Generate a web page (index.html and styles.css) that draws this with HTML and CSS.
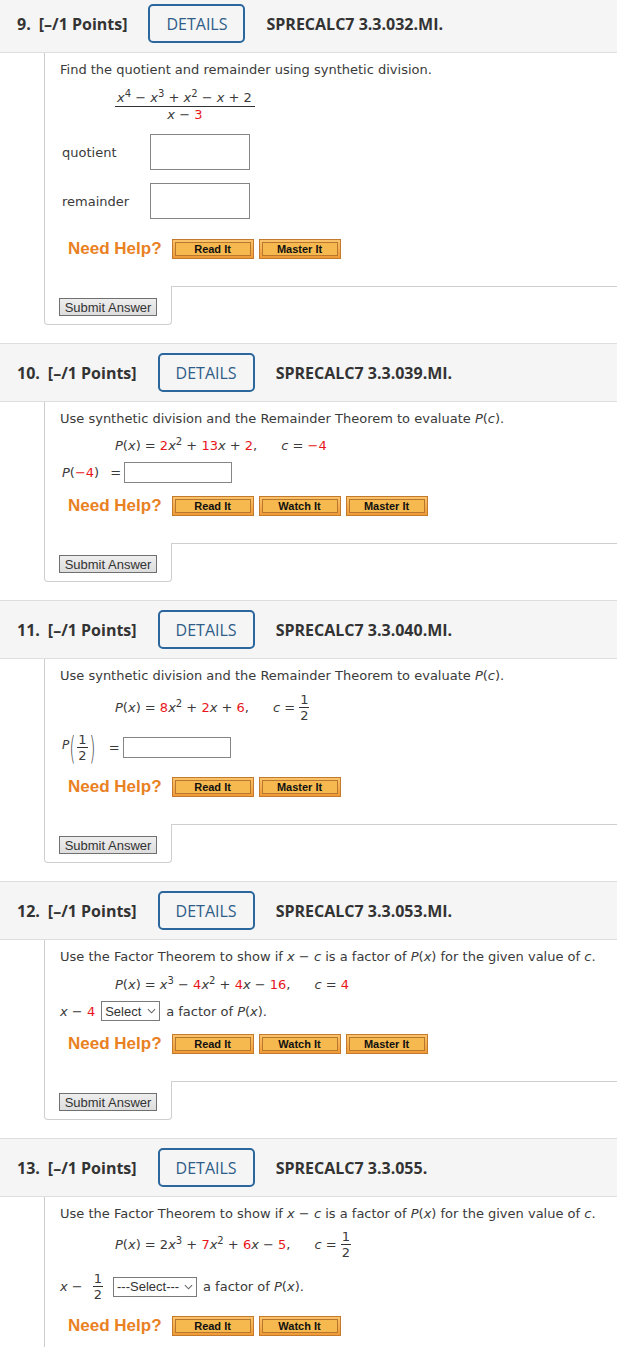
FILE: index.html
```html
<!DOCTYPE html>
<html>
<head>
<meta charset="utf-8">
<link rel="stylesheet" href="styles.css">
</head>
<body>
<div class="page">

<section class="problem">
  <div class="qhead">
    <span class="qnum">9.</span><span class="pts">[–/1 Points]</span>
    <span class="details">DETAILS</span>
    <span class="code">SPRECALC7 3.3.032.MI.</span>
  </div>
  <div class="qbody">
    <div class="content c9">
      <p class="prompt">Find the quotient and remainder using synthetic division.</p>
      <div class="display d9">
        <span class="frac">
          <span class="num"><i>x</i><sup>4</sup> − <i>x</i><sup>3</sup> + <i>x</i><sup>2</sup> − <i>x</i> + 2</span>
          <span class="den"><i>x</i> − <b class="r">3</b></span>
        </span>
      </div>
      <div class="field f-first"><span class="lbl">quotient</span><input class="box big" type="text"></div>
      <div class="field f-second"><span class="lbl">remainder</span><input class="box big" type="text"></div>
      <div class="help h9">
        <span class="need">Need Help?</span>
        <span class="hbtn"><span>Read It</span></span>
        <span class="hbtn"><span>Master It</span></span>
      </div>
    </div>
    <div class="footer"><div class="tab"><button class="submit">Submit Answer</button></div><div class="rest"></div></div>
  </div>
</section>

<section class="problem">
  <div class="qhead">
    <span class="qnum">10.</span><span class="pts">[–/1 Points]</span>
    <span class="details">DETAILS</span>
    <span class="code">SPRECALC7 3.3.039.MI.</span>
  </div>
  <div class="qbody">
    <div class="content">
      <p class="prompt">Use synthetic division and the Remainder Theorem to evaluate <i>P</i>(<i>c</i>).</p>
      <div class="display line d10"><i>P</i>(<i>x</i>) = <b class="r">2</b><i>x</i><sup>2</sup> + <b class="r">13</b><i>x</i> + <b class="r">2</b>,<span class="cgap"><i>c</i> = <b class="r">−4</b></span></div>
      <div class="answer a10"><span class="ans-lbl"><i>P</i>(<b class="r">−4</b>)</span><span class="eq">=</span><input class="box small" type="text"></div>
      <div class="help h10">
        <span class="need">Need Help?</span>
        <span class="hbtn"><span>Read It</span></span>
        <span class="hbtn"><span>Watch It</span></span>
        <span class="hbtn"><span>Master It</span></span>
      </div>
    </div>
    <div class="footer"><div class="tab"><button class="submit">Submit Answer</button></div><div class="rest"></div></div>
  </div>
</section>

<section class="problem">
  <div class="qhead">
    <span class="qnum">11.</span><span class="pts">[–/1 Points]</span>
    <span class="details">DETAILS</span>
    <span class="code">SPRECALC7 3.3.040.MI.</span>
  </div>
  <div class="qbody">
    <div class="content">
      <p class="prompt">Use synthetic division and the Remainder Theorem to evaluate <i>P</i>(<i>c</i>).</p>
      <div class="display fline d11"><span><i>P</i>(<i>x</i>) = <b class="r">8</b><i>x</i><sup>2</sup> + <b class="r">2</b><i>x</i> + <b class="r">6</b>,</span><span class="cgap"><i>c</i> = </span><span class="frac sm"><span class="num">1</span><span class="den">2</span></span></div>
      <div class="answer a11">
        <span class="ans-lbl pf"><i class="pp">P</i><span class="paren">(</span><span class="frac sm"><span class="num">1</span><span class="den">2</span></span><span class="paren">)</span></span>
        <span class="eq">=</span><input class="box small" type="text">
      </div>
      <div class="help h11">
        <span class="need">Need Help?</span>
        <span class="hbtn"><span>Read It</span></span>
        <span class="hbtn"><span>Master It</span></span>
      </div>
    </div>
    <div class="footer"><div class="tab"><button class="submit">Submit Answer</button></div><div class="rest"></div></div>
  </div>
</section>

<section class="problem">
  <div class="qhead">
    <span class="qnum">12.</span><span class="pts">[–/1 Points]</span>
    <span class="details">DETAILS</span>
    <span class="code">SPRECALC7 3.3.053.MI.</span>
  </div>
  <div class="qbody">
    <div class="content">
      <p class="prompt">Use the Factor Theorem to show if <i>x</i> − <i>c</i> is a factor of <i>P</i>(<i>x</i>) for the given value of <i>c</i>.</p>
      <div class="display line d12"><i>P</i>(<i>x</i>) = <i>x</i><sup>3</sup> − <b class="r">4</b><i>x</i><sup>2</sup> + <b class="r">4</b><i>x</i> − <b class="r">16</b>,<span class="cgap"><i>c</i> = <b class="r">4</b></span></div>
      <div class="sel-row s12"><span><i>x</i> − <b class="r">4</b></span><span class="sel w1">Select<svg class="chev" viewBox="0 0 10 6" width="9" height="6"><path d="M1 1 L5 5 L9 1" fill="none" stroke="#666" stroke-width="1.2"/></svg></span><span>a factor of <i>P</i>(<i>x</i>).</span></div>
      <div class="help h12">
        <span class="need">Need Help?</span>
        <span class="hbtn"><span>Read It</span></span>
        <span class="hbtn"><span>Watch It</span></span>
        <span class="hbtn"><span>Master It</span></span>
      </div>
    </div>
    <div class="footer"><div class="tab"><button class="submit">Submit Answer</button></div><div class="rest"></div></div>
  </div>
</section>

<section class="problem">
  <div class="qhead">
    <span class="qnum">13.</span><span class="pts">[–/1 Points]</span>
    <span class="details">DETAILS</span>
    <span class="code">SPRECALC7 3.3.055.</span>
  </div>
  <div class="qbody">
    <div class="content">
      <p class="prompt">Use the Factor Theorem to show if <i>x</i> − <i>c</i> is a factor of <i>P</i>(<i>x</i>) for the given value of <i>c</i>.</p>
      <div class="display fline d13"><span><i>P</i>(<i>x</i>) = 2<i>x</i><sup>3</sup> + <b class="r">7</b><i>x</i><sup>2</sup> + <b class="r">6</b><i>x</i> − <b class="r">5</b>,</span><span class="cgap"><i>c</i> = </span><span class="frac sm"><span class="num">1</span><span class="den">2</span></span></div>
      <div class="sel-row s13"><span><i>x</i> − </span><span class="frac sm xf"><span class="num">1</span><span class="den">2</span></span><span class="sel w2">---Select---<svg class="chev" viewBox="0 0 10 6" width="9" height="6"><path d="M1 1 L5 5 L9 1" fill="none" stroke="#666" stroke-width="1.2"/></svg></span><span>a factor of <i>P</i>(<i>x</i>).</span></div>
      <div class="help h13">
        <span class="need">Need Help?</span>
        <span class="hbtn"><span>Read It</span></span>
        <span class="hbtn"><span>Watch It</span></span>
      </div>
    </div>
  </div>
</section>

</div>
</body>
</html>
```

FILE: styles.css
```css
html, body {
  margin: 0;
  padding: 0;
  background: #fff;
}
.page {
  margin-top: -6px;
  font-family: "DejaVu Sans", Verdana, sans-serif;
  font-size: 13px;
  color: #3a3a3a;
}
.problem {
  margin-bottom: 18px;
}
.qhead {
  display: flex;
  align-items: center;
  height: 57px;
  background: #f5f5f5;
  border-top: 1px solid #dedede;
  border-bottom: 1px solid #dedede;
  padding-left: 17px;
  font-family: "Open Sans", "Liberation Sans", sans-serif;
  font-weight: 700;
  font-size: 16px;
  color: #333;
}
.qnum { margin-right: 8px; }
.details {
  box-sizing: border-box;
  height: 39px;
  width: 97px;
  margin: 0 21px;
  display: flex;
  align-items: center;
  justify-content: center;
  border: 2px solid #2b679c;
  border-radius: 5px;
  font-weight: 400;
  color: #2f5d88;
}
.qbody {
  margin-left: 44px;
}
.content {
  border-left: 1px solid #cfcfcf;
  padding: 9px 0 27px 15px;
}
.prompt {
  margin: 0;
  line-height: 16px;
}
i { font-style: oblique; }
b.r { font-weight: 400; color: #e8161b; }
sup {
  font-size: 10px;
  line-height: 0;
  vertical-align: 5px;
}
.display {
  margin-left: 55px;
}
.line { line-height: 20px; margin-top: 9px; }
.d12 { margin-top: 10px; }
.cgap { margin-left: 24px; }

.frac {
  display: inline-flex;
  flex-direction: column;
  align-items: center;
  vertical-align: middle;
}
.frac .num {
  line-height: 16px;
  padding: 0 2px;
  border-bottom: 1px solid #333;
}
.d9 .frac .num { padding: 0 3px 0 2px; }
.frac .den { line-height: 16px; }
.frac.sm .num { line-height: 15px; padding: 0 1px; }
.frac.sm .den { line-height: 15px; }

.d9 { margin-top: 12px; }

.field {
  display: flex;
  align-items: center;
  padding-left: 2px;
}
.f-first { margin-top: 11px; }
.f-second { margin-top: 13px; }
.lbl { width: 88px; }
.box {
  box-sizing: border-box;
  border: 1px solid #858585;
  background: #fff;
  margin: 0;
  padding: 0;
}
.box.big { width: 100px; height: 36px; }
.box.small { width: 108px; height: 21px; }

.answer {
  display: flex;
  align-items: center;
  padding-left: 2px;
}
.eq { margin: 0 3px 0 11px; }
.a10 { margin-top: 6px; }

.fline {
  display: flex;
  align-items: center;
}
.d11 { margin-top: 8px; }
.d11 .cgap, .d13 .cgap { margin-right: 4px; }
.a11 { margin-top: 9px; }
.pf { display: inline-flex; align-items: center; }
.pp { font-size: 12px; margin-right: -1px; position: relative; top: -3px; }
.paren {
  display: inline-block;
  transform: scale(1.15, 2.5);
  font-weight: 300;
  margin: 0 2px;
}
.a11 .eq { margin-left: 12px; }

.sel-row {
  display: flex;
  align-items: center;
  gap: 6px;
}
.s12 { margin-top: 6px; }
.sel {
  box-sizing: border-box;
  height: 20px;
  display: inline-flex;
  align-items: center;
  justify-content: space-between;
  border: 1px solid #7a7a7a;
  padding: 0 3px;
  font-family: "Liberation Sans", Arial, sans-serif;
  font-size: 13px;
  color: #333;
  background: #fff;
}
.sel.w1 { width: 59px; }
.sel.w2 { width: 84px; margin-left: 4px; }
.chev { margin-left: 3px; }
.d13 { margin-top: 7px; }
.s13 { margin-top: 11px; }
.xf { margin-left: 4px; }

.help {
  display: flex;
  align-items: center;
  gap: 5px;
}
.h9 { margin-top: 20px; }
.h10 { margin-top: 13px; }
.h11 { margin-top: 14px; }
.h12 { margin-top: 13px; }
.h13 { margin-top: 14px; }
.need {
  font-family: "Liberation Sans", Arial, sans-serif;
  font-weight: 700;
  font-size: 17px;
  color: #e98123;
  margin-left: 8px;
  margin-right: 5px;
  line-height: 20px;
}
.hbtn {
  box-sizing: border-box;
  width: 82px;
  height: 20px;
  padding: 2px;
  border: 1px solid #c47a2e;
  background: linear-gradient(#fbc46a, #ef9b36);
  display: flex;
}
.hbtn span {
  flex: 1;
  display: flex;
  align-items: center;
  justify-content: center;
  border: 1px solid #b8762f;
  background: #f6b94f;
  font-family: "Liberation Sans", Arial, sans-serif;
  font-weight: 700;
  font-size: 11px;
  color: #111;
}

.footer {
  display: flex;
}
.tab {
  border: 1px solid #cfcfcf;
  border-top: none;
  border-radius: 0 0 4px 4px;
  padding: 12px 14px 8px 14px;
}
.submit {
  box-sizing: border-box;
  width: 98px;
  height: 18px;
  margin: 0;
  padding: 0;
  border: 1px solid #707070;
  border-radius: 0;
  background: linear-gradient(#eeeeee, #dddddd);
  font-family: "Liberation Sans", Arial, sans-serif;
  font-size: 13px;
  color: #333;
  display: block;
}
.rest {
  flex: 1;
  border-top: 1px solid #cfcfcf;
}
```
